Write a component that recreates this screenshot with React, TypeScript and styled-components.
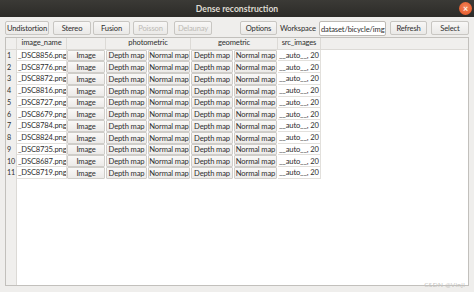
import styled, { createGlobalStyle } from "styled-components";

const GlobalStyle = createGlobalStyle`
  html, body {
    margin: 0;
    padding: 0;
    background: #efefef;
  }
  * {
    box-sizing: border-box;
  }
`;

const Window = styled.div`
  width: 474px;
  height: 292px;
  background: #efeeec;
  font-family: Lato, "Open Sans", sans-serif;
  font-size: 7.6px;
  letter-spacing: -0.15px;
  color: #2f2f2f;
  display: flex;
  flex-direction: column;
  position: relative;
  overflow: hidden;
`;

const TitleBar = styled.div`
  height: 17px;
  flex-shrink: 0;
  background: linear-gradient(#3b3a36, #2c2b28);
  display: flex;
  align-items: center;
  justify-content: center;
  position: relative;
  color: #dfdbd2;
  font-weight: bold;
  font-size: 8.6px;
  letter-spacing: 0;
`;

const CloseButton = styled.div`
  position: absolute;
  right: 2px;
  top: 2px;
  width: 13px;
  height: 13px;
  border-radius: 50%;
  background: radial-gradient(circle at 50% 40%, #f6845a, #e0511f);
  color: #fff3e8;
  font-size: 9px;
  line-height: 13px;
  text-align: center;
  font-weight: bold;
`;

const Toolbar = styled.div`
  display: flex;
  align-items: flex-start;
  padding: 4px 5px 0 5px;
  height: 19px;
  flex-shrink: 0;
`;

const Button = styled.div<{ $w: number; $gap?: number; $disabled?: boolean }>`
  width: ${(p) => p.$w}px;
  margin-right: ${(p) => p.$gap ?? 0}px;
  height: 14px;
  border: 1px solid #c8c6c2;
  border-radius: 2px;
  background: linear-gradient(#f8f7f6, #eae9e7);
  display: flex;
  align-items: center;
  justify-content: center;
  color: ${(p) => (p.$disabled ? "#bdbab5" : "#2f2f2f")};
  white-space: nowrap;
  flex-shrink: 0;
  overflow: hidden;
`;

const Spacer = styled.div`
  flex: 1;
`;

const Label = styled.div`
  width: 40px;
  height: 14px;
  display: flex;
  align-items: center;
  justify-content: center;
  white-space: nowrap;
  flex-shrink: 0;
`;

const Input = styled.div`
  width: 67px;
  height: 15px;
  margin: 0 4px 0 1px;
  border: 1px solid #bdbab5;
  border-radius: 2px;
  background: #fff;
  padding-left: 1px;
  display: flex;
  align-items: center;
  white-space: nowrap;
  overflow: hidden;
  flex-shrink: 0;
`;

const Frame = styled.div`
  margin: 1px 5px 0 5px;
  height: 249px;
  width: 464px;
  border: 1px solid #c2c0bc;
  background: #fff;
  display: flex;
  flex-direction: column;
  flex-shrink: 0;
`;

const HeaderRow = styled.div`
  display: flex;
  height: 11.5px;
  background: #f0efed;
  border-bottom: 1px solid #dcdad6;
  flex-shrink: 0;
`;

const HeaderCell = styled.div<{ $w: number }>`
  width: ${(p) => p.$w}px;
  border-right: 1px solid #dcdad6;
  display: flex;
  align-items: center;
  justify-content: center;
  white-space: nowrap;
  line-height: 1;
`;

const Body = styled.div`
  flex: 1;
  display: flex;
`;

const RowNumbers = styled.div`
  width: 11px;
  background: #f0efed;
  border-right: 1px solid #dcdad6;
  display: flex;
  flex-direction: column;
`;

const RowNumber = styled.div`
  height: 11.75px;
  padding-left: 1px;
  display: flex;
  align-items: center;
  white-space: nowrap;
  font-size: 7.2px;
`;

const Rows = styled.div`
  display: flex;
  flex-direction: column;
`;

const Row = styled.div`
  display: flex;
  height: 11.75px;
`;

const TextCell = styled.div<{ $w: number }>`
  width: ${(p) => p.$w}px;
  border-right: 1px solid #e2e0dc;
  border-bottom: 1px solid #e2e0dc;
  padding-left: 1px;
  display: flex;
  align-items: center;
  white-space: nowrap;
  overflow: hidden;
`;

const ButtonCell = styled.div<{ $w: number }>`
  width: ${(p) => p.$w}px;
  padding: 0 1px 0 0;
  display: flex;
`;

const CellButton = styled.div`
  flex: 1;
  border: 1px solid #cfcdc9;
  border-radius: 1px;
  background: linear-gradient(#f9f8f7, #eceae8);
  display: flex;
  align-items: center;
  justify-content: center;
  white-space: nowrap;
  overflow: hidden;
`;

const Watermark = styled.div`
  position: absolute;
  right: 9px;
  bottom: 4px;
  font-size: 6.5px;
  color: #c4c2be;
  letter-spacing: 0.3px;
`;

const names = [
  "_DSC8856.png",
  "_DSC8776.png",
  "_DSC8872.png",
  "_DSC8816.png",
  "_DSC8727.png",
  "_DSC8679.png",
  "_DSC8784.png",
  "_DSC8824.png",
  "_DSC8735.png",
  "_DSC8687.png",
  "_DSC8719.png",
];

const W = {
  name: 50,
  image: 39,
  depth1: 42,
  normal1: 43,
  depth2: 43,
  normal2: 44,
  src: 43,
};

export default function App() {
  return (
    <>
      <GlobalStyle />
      <Window>
        <TitleBar>
          Dense reconstruction
          <CloseButton>×</CloseButton>
        </TitleBar>
        <Toolbar>
          <Button $w={44} $gap={4}>Undistortion</Button>
          <Button $w={38} $gap={2}>Stereo</Button>
          <Button $w={37} $gap={3}>Fusion</Button>
          <Button $w={35} $gap={6} $disabled>Poisson</Button>
          <Button $w={38} $disabled>Delaunay</Button>
          <Spacer />
          <Button $w={37} $gap={1}>Options</Button>
          <Label>Workspace</Label>
          <Input>dataset/bicycle/img</Input>
          <Button $w={37} $gap={4}>Refresh</Button>
          <Button $w={38}>Select</Button>
        </Toolbar>
        <Frame>
          <HeaderRow>
            <HeaderCell $w={11} />
            <HeaderCell $w={W.name}>image_name</HeaderCell>
            <HeaderCell $w={W.image} />
            <HeaderCell $w={W.depth1 + W.normal1}>photometric</HeaderCell>
            <HeaderCell $w={W.depth2 + W.normal2}>geometric</HeaderCell>
            <HeaderCell $w={W.src}>src_images</HeaderCell>
          </HeaderRow>
          <Body>
            <RowNumbers>
              {names.map((_, i) => (
                <RowNumber key={i}>{i + 1}</RowNumber>
              ))}
            </RowNumbers>
            <Rows>
              {names.map((n) => (
                <Row key={n}>
                  <TextCell $w={W.name}>{n}</TextCell>
                  <ButtonCell $w={W.image}>
                    <CellButton>Image</CellButton>
                  </ButtonCell>
                  <ButtonCell $w={W.depth1}>
                    <CellButton>Depth map</CellButton>
                  </ButtonCell>
                  <ButtonCell $w={W.normal1}>
                    <CellButton>Normal map</CellButton>
                  </ButtonCell>
                  <ButtonCell $w={W.depth2}>
                    <CellButton>Depth map</CellButton>
                  </ButtonCell>
                  <ButtonCell $w={W.normal2}>
                    <CellButton>Normal map</CellButton>
                  </ButtonCell>
                  <TextCell $w={W.src}>__auto__, 20</TextCell>
                </Row>
              ))}
            </Rows>
          </Body>
        </Frame>
        <Watermark>CSDN @Vinjl</Watermark>
      </Window>
    </>
  );
}
